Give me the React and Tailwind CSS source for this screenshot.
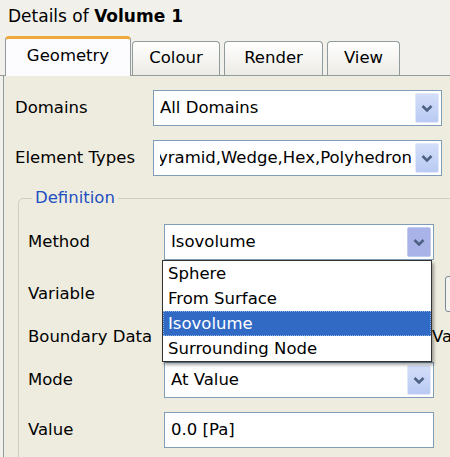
import React from "react";

const Arrow = ({ hot }) => (
  <div
    className={
      "flex items-center justify-center w-[24px] h-[30px] rounded-[2px] border shrink-0 " +
      (hot
        ? "bg-[#a9b3e8] border-[#c3caf0]"
        : "bg-gradient-to-b from-[#d3def9] to-[#b9caf3] border-[#e2e9fb]")
    }
  >
    <svg width="12" height="9" viewBox="0 0 12 9">
      <path d="M1.5 2 L6 6.5 L10.5 2" fill="none" stroke="#4d6185" strokeWidth="2.6" />
    </svg>
  </div>
);

const Combo = ({ text, hot, className = "", end }) => (
  <div
    className={
      "flex items-center h-[36px] bg-white border border-[#7f9db9] pl-[6px] pr-[2px] overflow-hidden " +
      className
    }
  >
    <div
      className={
        "flex-1 flex whitespace-nowrap overflow-hidden " + (end ? "justify-end pr-[3px]" : "")
      }
    >
      {text}
    </div>
    <Arrow hot={hot} />
  </div>
);

export default function App() {
  return (
    <div
      className="relative w-[450px] h-[457px] overflow-hidden bg-[#f1f0ea] text-black text-[16.5px]"
      style={{ fontFamily: '"DejaVu Sans", Verdana, sans-serif' }}
    >
      {/* Title */}
      <div className="h-[37px] pl-[8px] pt-[5px] text-[17px] leading-[22px] whitespace-nowrap">
        Details of <span className="font-bold">Volume 1</span>
      </div>

      {/* Tabs */}
      <div className="relative flex items-end h-[39px] pl-[5px] border-b border-[#919b9c]">
        <div className="relative z-10 -mb-px w-[126px] h-[40px] bg-[#fcfcfe] border-x border-[#919b9c] rounded-t-[4px] border-t-[3px] border-t-[#f0a83c] flex items-center justify-center pb-[2px]">
          Geometry
        </div>
        <div className="ml-[1px] w-[88px] h-[34px] bg-gradient-to-b from-white to-[#ecebe5] border border-b-0 border-[#919b9c] rounded-t-[4px] flex items-center justify-center">
          Colour
        </div>
        <div className="ml-[4px] w-[99px] h-[34px] bg-gradient-to-b from-white to-[#ecebe5] border border-b-0 border-[#919b9c] rounded-t-[4px] flex items-center justify-center">
          Render
        </div>
        <div className="ml-[4px] w-[73px] h-[34px] bg-gradient-to-b from-white to-[#ecebe5] border border-b-0 border-[#919b9c] rounded-t-[4px] flex items-center justify-center">
          View
        </div>
      </div>

      {/* Panel */}
      <div className="ml-[3px] h-[400px] border-l border-[#919b9c] bg-[#eeecdf] pl-[11px] pt-[14px]">
        <div className="flex items-center h-[36px]">
          <div className="w-[138px]">Domains</div>
          <Combo text="All Domains" className="w-[289px]" />
        </div>
        <div className="flex items-center h-[36px] mt-[14px]">
          <div className="w-[138px] whitespace-nowrap">Element Types</div>
          <Combo
            text={<span className="shrink-0">Pyramid,Wedge,Hex,Polyhedron</span>}
            end
            className="w-[289px] pl-[2px]"
          />
        </div>

        {/* Group box */}
        <div className="relative mt-[22px] ml-[3px] w-[460px] h-[290px] border border-[#d0d0bf] rounded-[5px] pl-[9px] pt-[25px]">
          <div className="absolute -top-[12px] left-[13px] px-[3px] bg-[#eeecdf] text-[#1f4fc2] leading-[22px]">
            Definition
          </div>

          <div className="flex items-center h-[36px]">
            <div className="w-[136px]">Method</div>
            <Combo text="Isovolume" hot className="w-[270px]" />
          </div>

          <div className="flex items-center h-[36px] mt-[16px]">
            <div className="w-[136px]">Variable</div>
            <div className="w-[270px]" />
            <div className="ml-[11px] w-[20px] h-[36px] border border-[#7a8a99] rounded-[3px] bg-[#f4f3ee]" />
          </div>

          <div className="flex items-center h-[36px] mt-[7px]">
            <div className="w-[136px] whitespace-nowrap">Boundary Data</div>
            <div className="w-[268px] shrink-0" />
            <div className="whitespace-nowrap">Va</div>
          </div>

          <div className="flex items-center h-[36px] mt-[7px]">
            <div className="w-[136px]">Mode</div>
            <Combo text="At Value" className="w-[270px]" />
          </div>

          <div className="flex items-center h-[36px] mt-[14px]">
            <div className="w-[136px]">Value</div>
            <div className="w-[270px] h-[36px] bg-white border border-[#7f9db9] flex items-center pl-[6px]">
              0.0 [Pa]
            </div>
          </div>
        </div>
      </div>

      {/* Dropdown list */}
      <div className="absolute left-[162px] top-[260px] w-[270px] bg-white border border-[#333] shadow-[2px_3px_3px_rgba(0,0,0,0.35)] flex flex-col">
        <div className="h-[25px] leading-[25px] pl-[5px]">Sphere</div>
        <div className="h-[25px] leading-[25px] pl-[5px]">From Surface</div>
        <div className="h-[25px] leading-[23px] pl-[4px] bg-[#316ac5] text-white border border-dotted border-[#8fb0e4]">
          Isovolume
        </div>
        <div className="h-[25px] leading-[25px] pl-[5px]">Surrounding Node</div>
      </div>
    </div>
  );
}
